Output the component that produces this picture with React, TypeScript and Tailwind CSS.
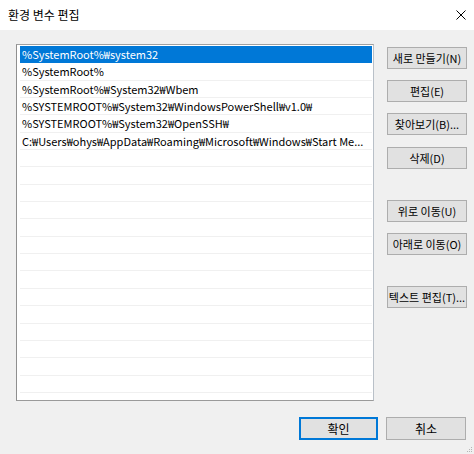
import React from "react";

const entries = [
  "%SystemRoot%₩system32",
  "%SystemRoot%",
  "%SystemRoot%₩System32₩Wbem",
  "%SYSTEMROOT%₩System32₩WindowsPowerShell₩v1.0₩",
  "%SYSTEMROOT%₩System32₩OpenSSH₩",
  "C:₩Users₩ohys₩AppData₩Roaming₩Microsoft₩Windows₩Start Me...",
];

const TOTAL_ROWS = 21;

function Btn({ label, className = "" }: { label: string; className?: string }) {
  return (
    <button
      className={
        "w-[80px] h-[22px] bg-[#e1e1e1] border border-[#adadad] text-[11px] leading-none whitespace-nowrap text-black flex items-center justify-center " +
        className
      }
    >
      {label}
    </button>
  );
}

export default function App() {
  const rows = Array.from({ length: TOTAL_ROWS }, (_, i) => entries[i] ?? "");
  return (
    <div
      className="w-[474px] h-[454px] bg-[#f0f0f0] flex flex-col relative overflow-hidden"
      style={{ fontFamily: '"Noto Sans CJK KR", "Noto Sans", sans-serif' }}
    >
      {/* title bar */}
      <div className="h-[30px] bg-white flex items-center justify-between pl-[8px] pr-[7px]">
        <span className="text-[12px] text-black">환경 변수 편집</span>
        <svg width="10" height="10" viewBox="0 0 10 10" className="mr-[1px]">
          <path d="M0.5 0.5 L9.5 9.5 M9.5 0.5 L0.5 9.5" stroke="#000" strokeWidth="1" />
        </svg>
      </div>

      {/* body */}
      <div className="flex pt-[14px] pl-[16px]">
        {/* list */}
        <div className="w-[358px] h-[357px] bg-white border border-[#8f8f8f] border-t-[#a0a0a0] border-r-[#b9c0c8] border-b-[#9a9a9a] pt-[1px] pl-[3px] pr-[1px] overflow-hidden">
          {rows.map((text, i) => (
            <div
              key={i}
              className={
                "h-[17.35px] flex items-center pl-[2px] whitespace-nowrap overflow-hidden text-[11px] border-b border-[#f0f0f0] " +
                (i === 0 ? "bg-[#0078d7] text-white border-b-[#0078d7]" : "text-black")
              }
            >
              {text}
            </div>
          ))}
        </div>

        {/* side buttons */}
        <div className="ml-[13px] pt-[3px] flex flex-col">
          <Btn label="새로 만들기(N)" />
          <Btn label="편집(E)" className="mt-[11px]" />
          <Btn label="찾아보기(B)..." className="mt-[11px]" />
          <Btn label="삭제(D)" className="mt-[12px]" />
          <Btn label="위로 이동(U)" className="mt-[31px]" />
          <Btn label="아래로 이동(O)" className="mt-[11px]" />
          <Btn label="텍스트 편집(T)..." className="mt-[31px]" />
        </div>
      </div>

      {/* footer */}
      <div className="flex justify-end pr-[8px] mt-[16px] gap-[8px]">
        <button className="w-[79px] h-[23px] bg-[#e1e1e1] border-2 border-[#0078d7] text-[12px] leading-none flex items-center justify-center">
          확인
        </button>
        <button className="w-[80px] h-[23px] bg-[#e1e1e1] border border-[#adadad] text-[12px] leading-none flex items-center justify-center">
          취소
        </button>
      </div>

      {/* size grip */}
      <svg width="8" height="8" viewBox="0 0 8 8" className="absolute right-[1px] bottom-[1px]">
        <rect x="6" y="2" width="1" height="1" fill="#b5b5b5" />
        <rect x="4" y="4" width="1" height="1" fill="#b5b5b5" />
        <rect x="6" y="4" width="1" height="1" fill="#b5b5b5" />
        <rect x="2" y="6" width="1" height="1" fill="#b5b5b5" />
        <rect x="4" y="6" width="1" height="1" fill="#b5b5b5" />
        <rect x="6" y="6" width="1" height="1" fill="#b5b5b5" />
      </svg>
    </div>
  );
}
